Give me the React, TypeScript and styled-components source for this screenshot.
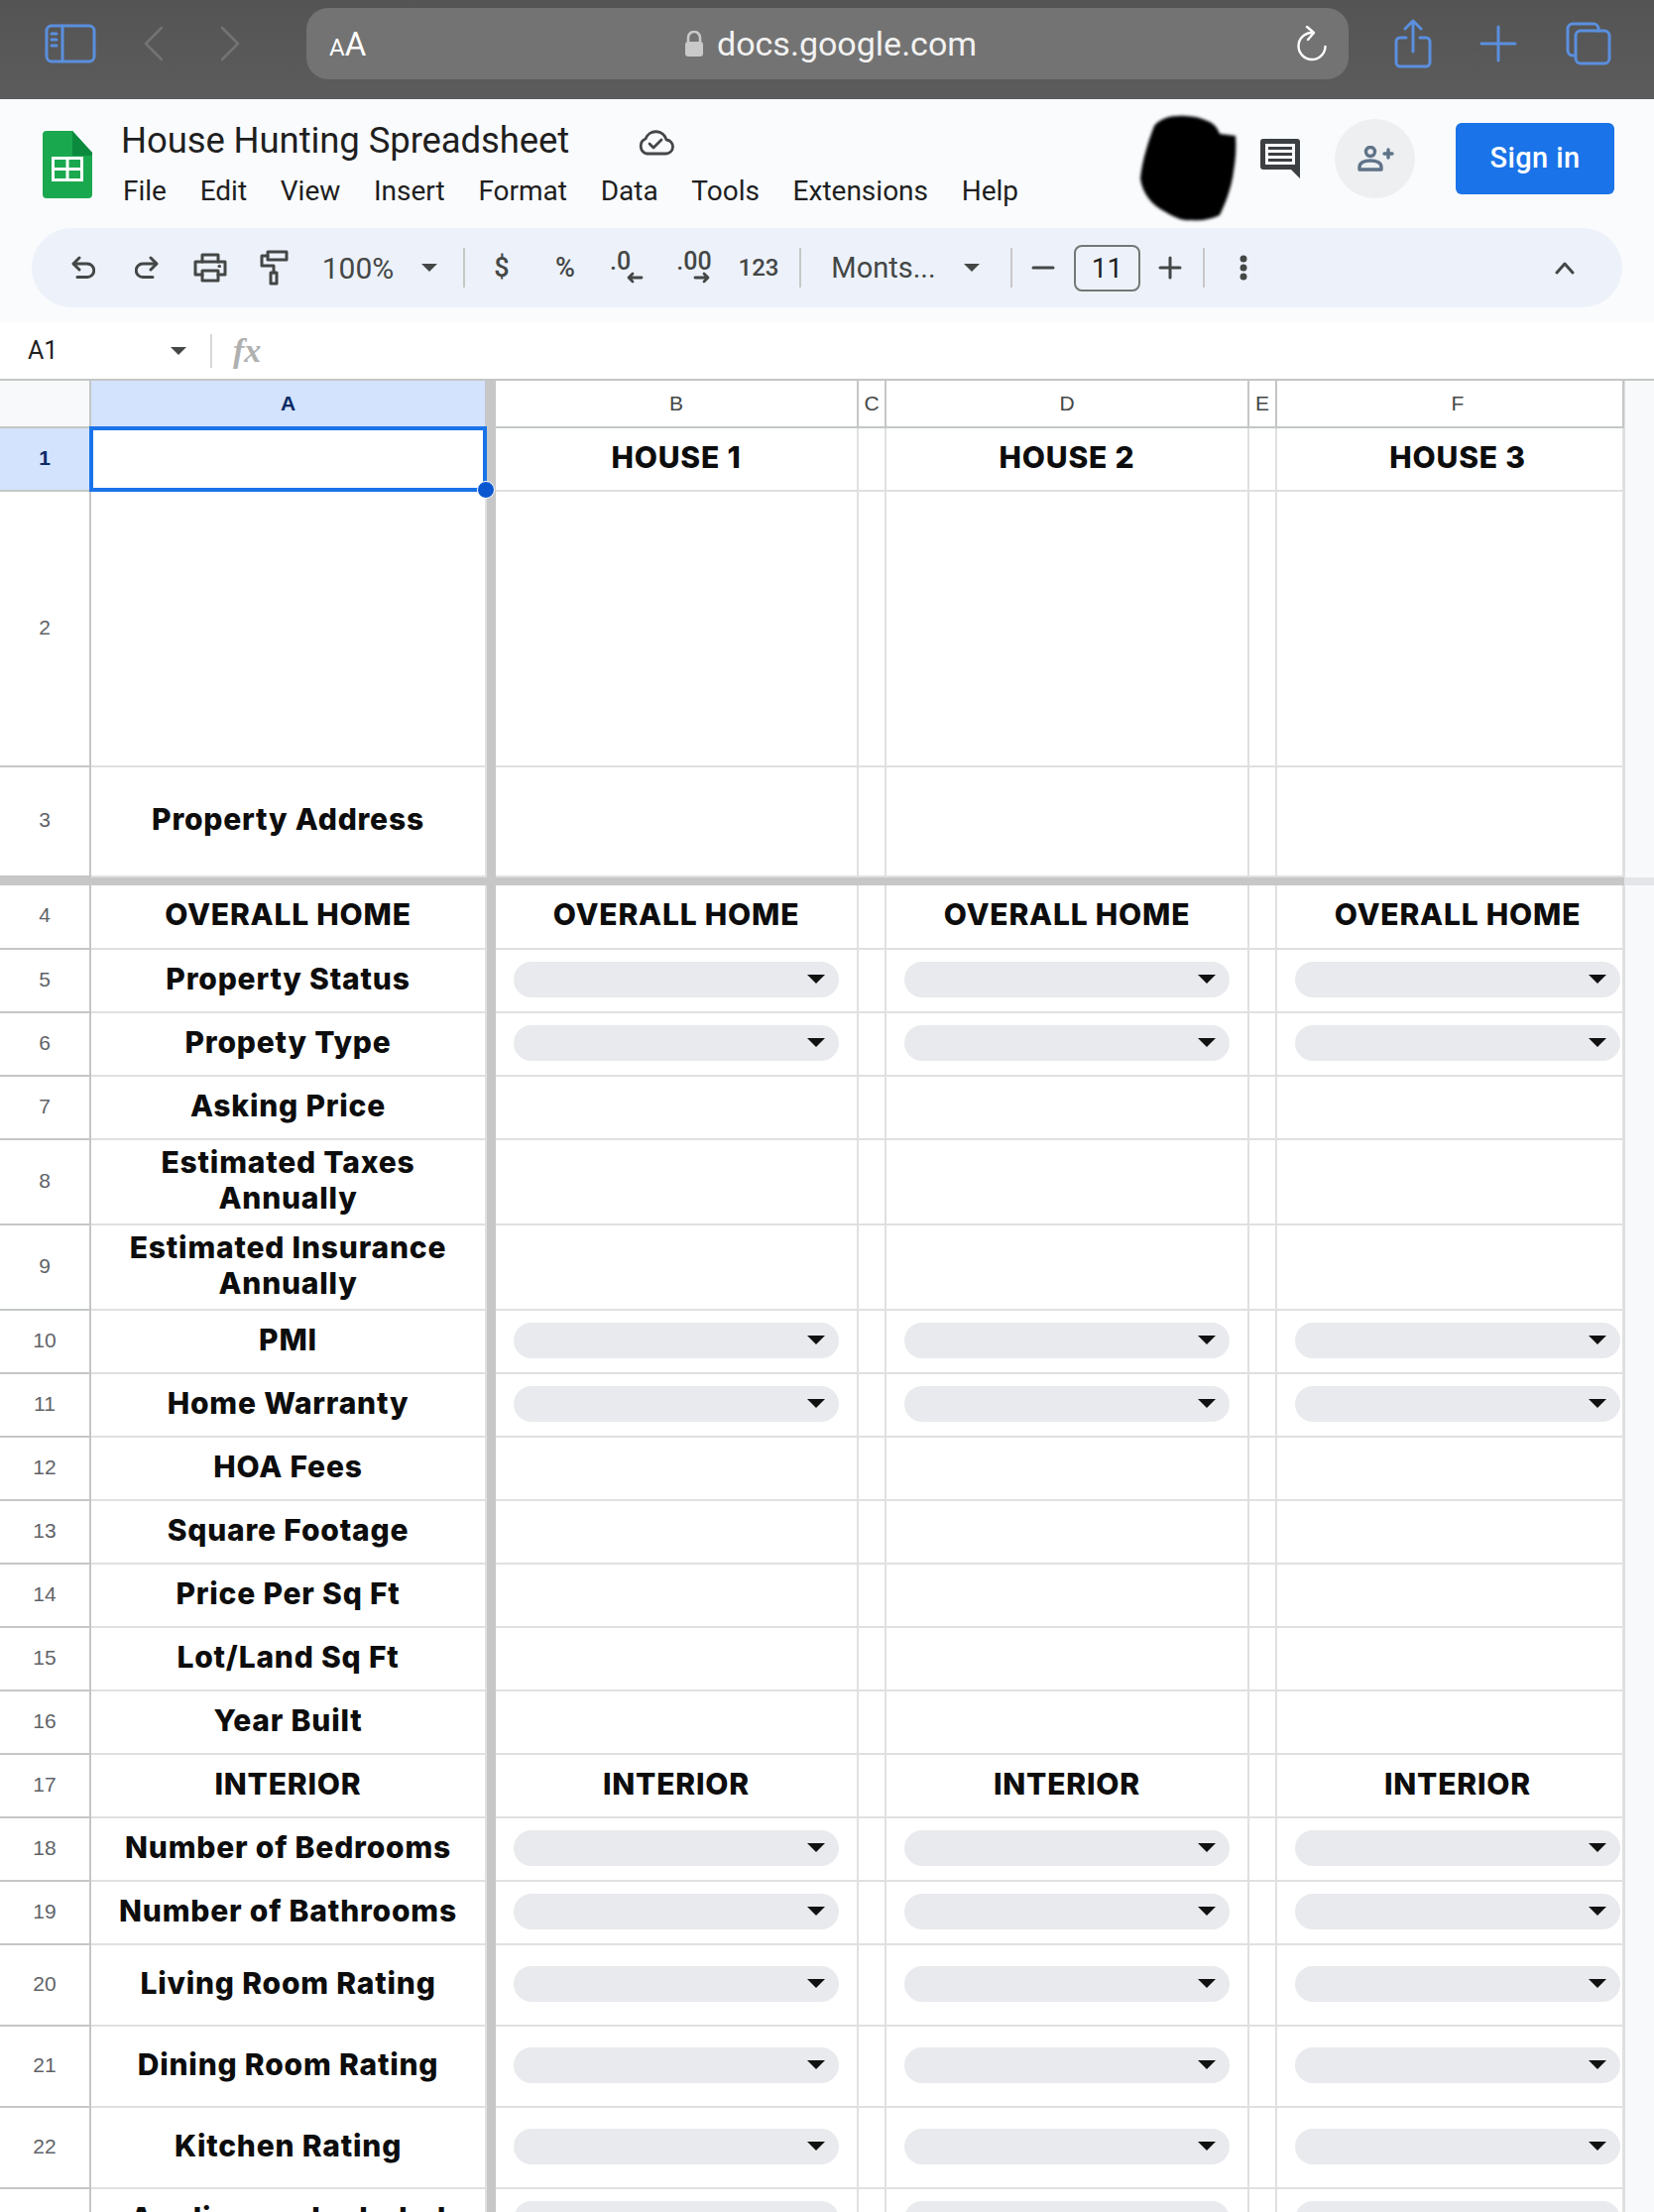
import React from 'react'
import styled, { createGlobalStyle } from 'styled-components'

const GlobalStyle = createGlobalStyle`
  html, body {
    margin: 0;
    padding: 0;
    background: #fff;
    font-family: Roboto, 'Liberation Sans', sans-serif;
  }
  * { box-sizing: border-box; }
`

const Page = styled.div`
  position: relative;
  width: 1668px;
  height: 2231px;
  overflow: hidden;
  background: #fff;
`

/* safari bar */
const SafariBar = styled.div`
  height: 100px;
  padding-bottom: 12px;
  background: linear-gradient(#545454, #5c5c5c);
  display: flex;
  align-items: center;
`

const SafariIcon = styled.div<{ $w: number; $ml: number }>`
  width: ${p => p.$w}px;
  margin-left: ${p => p.$ml}px;
  flex: none;
  display: flex;
  justify-content: center;
  align-items: center;
`

const AddressBar = styled.div`
  width: 1051px;
  height: 72px;
  margin-left: 66px;
  border-radius: 22px;
  background: #737373;
  flex: none;
  display: flex;
  align-items: center;
  color: #fff;
  padding: 0 21px 0 23px;
`

const TextSize = styled.span`
  width: 358px;
  font-size: 33px;
  line-height: 1;
  span { font-size: 24px; }
`

const HostName = styled.div`
  display: flex;
  align-items: center;
  gap: 13px;
  font-size: 34px;
  color: #f2f2f2;
  flex: 1;
`

/* docs header */
const DocHeader = styled.div`
  height: 225px;
  background: #f9fbfd;
  padding: 0 32px;
  display: flex;
  flex-direction: column;
`

const TitleRow = styled.div`
  height: 130px;
  display: flex;
  align-items: flex-start;
`

const Logo = styled.div`
  width: 50px;
  margin: 32px 0 0 11px;
  flex: none;
  line-height: 0;
`

const TitleBlock = styled.div`
  margin-left: 29px;
  flex: none;
  width: 1000px;
`

const TitleLine = styled.div`
  display: flex;
  align-items: center;
  margin-top: 17px;
  height: 48px;
`

const DocTitle = styled.span`
  font-size: 36.5px;
  color: #1f1f1f;
  letter-spacing: -0.1px;
  width: 520px;
`

const CloudIcon = styled.svg`
  margin-top: 6px;
`

const MenuRow = styled.div`
  display: flex;
  margin: 8px 0 0 2px;
  gap: 33.7px;
  font-size: 28px;
  line-height: 40px;
  color: #1f1f1f;
`

const HeaderRight = styled.div`
  display: flex;
  align-items: center;
  margin: 20px 0 0 0;
  height: 80px;
`

const CommentBtn = styled.div`
  margin-left: 149px;
  width: 40px;
  line-height: 0;
`

const ShareCircle = styled.div`
  width: 81px;
  height: 80px;
  margin-left: 35px;
  border-radius: 50%;
  background: #edeff1;
  display: flex;
  align-items: center;
  justify-content: center;
`

const SignIn = styled.div`
  width: 160px;
  height: 72px;
  margin-left: 41px;
  padding-bottom: 2px;
  border-radius: 6px;
  background: #1a73e8;
  color: #fff;
  font-size: 29px;
  font-weight: 500;
  letter-spacing: 0.4px;
  display: flex;
  align-items: center;
  justify-content: center;
`

const Blob = styled.svg`
  position: absolute;
  left: 1146px;
  top: 113px;
  filter: blur(1.5px);
`

const Toolbar = styled.div`
  height: 80px;
  width: 1604px;
  background: #edf2fa;
  border-radius: 40px;
  padding: 0 26px 0 20px;
  display: flex;
  align-items: center;
  color: #444746;
`

const Slot = styled.div<{ $w: number }>`
  width: ${p => p.$w}px;
  height: 48px;
  flex: none;
  display: flex;
  align-items: center;
  justify-content: center;
  font-size: 30px;
`

const CollapseSlot = styled(Slot)`
  margin-left: auto;
`

const FontName = styled.span`
  font-size: 29px;
`

const SmallText = styled.span`
  font-size: 24px;
  font-weight: 500;
`

const MedText = styled.span`
  font-size: 27px;
  font-weight: 500;
`

const ToolSep = styled.div`
  width: 2px;
  height: 40px;
  background: #c7c7c7;
  flex: none;
`

const SizeBox = styled.div`
  width: 67px;
  height: 47px;
  margin-left: 9px;
  border: 2px solid #747775;
  border-radius: 8px;
  display: flex;
  align-items: center;
  justify-content: center;
  font-size: 28px;
  flex: none;
  color: #1f1f1f;
`

const Decimal = styled.div`
  display: flex;
  flex-direction: column;
  align-items: flex-start;
  font-size: 25px;
  font-weight: 500;
  line-height: 20px;
  svg { margin: 0 0 0 17px; }
`

const Arrow = styled.span<{ $c?: string; $w?: number }>`
  display: block;
  width: 0;
  height: 0;
  border-left: ${p => p.$w ?? 8}px solid transparent;
  border-right: ${p => p.$w ?? 8}px solid transparent;
  border-top: ${p => p.$w ?? 8}px solid ${p => p.$c ?? '#444746'};
`

/* formula bar */
const FormulaBar = styled.div`
  height: 59px;
  border-bottom: 2px solid #c4c7c5;
  display: flex;
  align-items: center;
  background: #fff;
`

const NameBox = styled.div`
  width: 212px;
  padding: 0 24px 0 28px;
  font-size: 25px;
  color: #1f1f1f;
  display: flex;
  align-items: center;
  justify-content: space-between;
`

const FormulaSep = styled.div`
  width: 2px;
  height: 34px;
  background: #d5d7d9;
`

const Fx = styled.span`
  margin-left: 21px;
  font-family: 'Liberation Serif', serif;
  font-style: italic;
  font-weight: 700;
  font-size: 34px;
  color: #b0b0b0;
`

/* sheet */
const columns = '92px 399px 9px 366px 28px 366px 28px 350px 30px'

const ColHeaderRow = styled.div`
  display: grid;
  grid-template-columns: ${columns};
  height: 48px;
`

const ColHead = styled.div<{ $active?: boolean; $shifted?: boolean }>`
  display: flex;
  align-items: center;
  justify-content: center;
  padding-left: ${p => (p.$shifted ? 16 : 0)}px;
  padding-bottom: 1px;
  font-family: 'Liberation Sans', Arial, sans-serif;
  font-size: 21px;
  font-weight: ${p => (p.$active ? 700 : 400)};
  color: ${p => (p.$active ? '#0b2a66' : '#444746')};
  background: ${p => (p.$active ? '#d3e3fd' : '#fff')};
  border-bottom: 2px solid #c4c7c5;
  border-right: 2px solid #c4c7c5;
`

const Corner = styled(ColHead)`
  background: #f8f9fa;
`

const Row = styled.div<{ $h: number }>`
  display: grid;
  grid-template-columns: ${columns};
  height: ${p => p.$h}px;
`

const RowHead = styled.div<{ $active?: boolean }>`
  display: flex;
  align-items: center;
  justify-content: center;
  padding-bottom: 3px;
  font-family: 'Liberation Sans', Arial, sans-serif;
  font-size: 21px;
  font-weight: ${p => (p.$active ? 700 : 400)};
  color: ${p => (p.$active ? '#0b2a66' : '#5f6368')};
  background: ${p => (p.$active ? '#d3e3fd' : '#fff')};
  border-right: 2px solid #c4c7c5;
  border-bottom: 2px solid #c4c7c5;
`

const Cell = styled.div<{ $shifted?: boolean }>`
  position: relative;
  display: flex;
  align-items: center;
  justify-content: center;
  padding: 0 8px 3px ${p => (p.$shifted ? 24 : 8)}px;
  text-align: center;
  font-family: Inter, 'Liberation Sans', sans-serif;
  font-weight: 800;
  font-size: 30px;
  line-height: 35.5px;
  letter-spacing: 0.8px;
  color: #0d0d0d;
  border-right: 2px solid #e0e0e0;
  border-bottom: 2px solid #e0e0e0;
`

const Gutter = styled.div`
  background: #f8f9fa;
  border-left: 1px solid #e0e0e0;
`

const FreezeV = styled.div`
  background: #c7c7c7;
`

const FreezeH = styled.div`
  display: flex;
  height: 8px;
`

const FreezeMain = styled.div`
  width: 1638px;
  background: #c7c7c7;
`

const FreezeEdge = styled.div`
  flex: 1;
  background: #e3e5e8;
`

const Selection = styled.div`
  position: absolute;
  inset: -2px -2px -2px -2px;
  border: 4px solid #1a73e8;
`

const Handle = styled.div`
  position: absolute;
  right: -12px;
  bottom: -11px;
  width: 18px;
  height: 18px;
  border-radius: 50%;
  background: #0b57d0;
  border: 1px solid #fff;
  z-index: 2;
`

const Chip = styled.div`
  width: 328px;
  height: 36px;
  border-radius: 18px;
  background: #e8eaed;
  display: flex;
  align-items: center;
  justify-content: flex-end;
  padding-right: 14px;
  flex: none;
`

const ChipCell = styled(Cell)`
  justify-content: flex-start;
  padding: 0 0 3px 18px;
`

type RowDef = { n: number; h: number; label: string; kind?: 'chip' | 'head' }

const rowsTop: RowDef[] = [
  { n: 2, h: 278, label: '' },
  { n: 3, h: 111, label: 'Property Address' },
]

const rowsBottom: RowDef[] = [
  { n: 4, h: 65, label: 'OVERALL HOME', kind: 'head' },
  { n: 5, h: 64, label: 'Property Status', kind: 'chip' },
  { n: 6, h: 64, label: 'Propety Type', kind: 'chip' },
  { n: 7, h: 64, label: 'Asking Price' },
  { n: 8, h: 86, label: 'Estimated Taxes Annually' },
  { n: 9, h: 86, label: 'Estimated Insurance Annually' },
  { n: 10, h: 64, label: 'PMI', kind: 'chip' },
  { n: 11, h: 64, label: 'Home Warranty', kind: 'chip' },
  { n: 12, h: 64, label: 'HOA Fees' },
  { n: 13, h: 64, label: 'Square Footage' },
  { n: 14, h: 64, label: 'Price Per Sq Ft' },
  { n: 15, h: 64, label: 'Lot/Land Sq Ft' },
  { n: 16, h: 64, label: 'Year Built' },
  { n: 17, h: 64, label: 'INTERIOR', kind: 'head' },
  { n: 18, h: 64, label: 'Number of Bedrooms', kind: 'chip' },
  { n: 19, h: 64, label: 'Number of Bathrooms', kind: 'chip' },
  { n: 20, h: 82, label: 'Living Room Rating', kind: 'chip' },
  { n: 21, h: 82, label: 'Dining Room Rating', kind: 'chip' },
  { n: 22, h: 82, label: 'Kitchen Rating', kind: 'chip' },
  { n: 23, h: 64, label: 'Appliances Included', kind: 'chip' },
]

const menuItems = ['File', 'Edit', 'View', 'Insert', 'Format', 'Data', 'Tools', 'Extensions', 'Help']

const blue = '#5b8fdf'

const Stroke: React.FC<{ size?: number; w?: number; h?: number; box?: string; color?: string; sw?: number; children: React.ReactNode }> = ({
  size = 24,
  w,
  h,
  box = '0 0 24 24',
  color = '#444746',
  sw = 3,
  children,
}) => (
  <svg width={w ?? size} height={h ?? size} viewBox={box} fill="none" stroke={color} strokeWidth={sw} strokeLinecap="round" strokeLinejoin="round">
    {children}
  </svg>
)

const HouseCells: React.FC<{ row: RowDef }> = ({ row }) => {
  const content = (col: number) => {
    if (row.kind === 'chip') {
      return (
        <ChipCell key={col}>
          <Chip>
            <Arrow $c="#111" $w={9} />
          </Chip>
        </ChipCell>
      )
    }
    return (
      <Cell key={col} $shifted={col === 3}>
        {row.kind === 'head' ? row.label : ''}
      </Cell>
    )
  }
  return (
    <>
      {content(1)}
      <Cell />
      {content(2)}
      <Cell />
      {content(3)}
      <Gutter />
    </>
  )
}

const SheetRow: React.FC<{ row: RowDef }> = ({ row }) => (
  <Row $h={row.h}>
    <RowHead>{row.n}</RowHead>
    <Cell>{row.label}</Cell>
    <FreezeV />
    <HouseCells row={row} />
  </Row>
)

export default function App() {
  return (
    <Page>
      <GlobalStyle />
      <SafariBar>
        <SafariIcon $w={52} $ml={45}>
          <Stroke w={52} h={40} box="0 0 52 40" color={blue} sw={3}>
            <rect x="2" y="2" width="48" height="36" rx="5" />
            <path d="M18 2v36M7 10h5M7 16h5M7 22h5" />
          </Stroke>
        </SafariIcon>
        <SafariIcon $w={22} $ml={47}>
          <Stroke w={22} h={36} box="0 0 22 36" color="#737373" sw={2.6}>
            <path d="M19 2 3 18l16 16" />
          </Stroke>
        </SafariIcon>
        <SafariIcon $w={22} $ml={55}>
          <Stroke w={22} h={36} box="0 0 22 36" color="#737373" sw={2.6}>
            <path d="M3 2l16 16L3 34" />
          </Stroke>
        </SafariIcon>
        <AddressBar>
          <TextSize>
            <span>A</span>A
          </TextSize>
          <HostName>
            <svg width="20" height="26" viewBox="0 0 20 26">
              <path d="M4 12V7a6 6 0 0 1 12 0v5" fill="none" stroke="#c9c9c9" strokeWidth="2.6" />
              <rect x="1" y="11" width="18" height="15" rx="3" fill="#c9c9c9" />
            </svg>
            docs.google.com
          </HostName>
          <Stroke w={32} h={36} box="0 0 32 36" color="#fff" sw={2.4}>
            <path d="M16 7a13.5 13.5 0 1 0 13.5 14" />
            <path d="M11 1l7 6-6 7" />
          </Stroke>
        </AddressBar>
        <SafariIcon $w={38} $ml={46}>
          <Stroke w={38} h={50} box="0 0 38 50" color={blue} sw={3}>
            <path d="M12 19H6a4 4 0 0 0-4 4v21a4 4 0 0 0 4 4h26a4 4 0 0 0 4-4V23a4 4 0 0 0-4-4h-6" />
            <path d="M19 33V3M11 10l8-8 8 8" />
          </Stroke>
        </SafariIcon>
        <SafariIcon $w={38} $ml={48}>
          <Stroke size={38} box="0 0 38 38" color={blue} sw={3}>
            <path d="M19 2v34M2 19h34" />
          </Stroke>
        </SafariIcon>
        <SafariIcon $w={46} $ml={49}>
          <Stroke w={46} h={44} box="0 0 46 44" color={blue} sw={3}>
            <path d="M8 34H7a5 5 0 0 1-5-5V7a5 5 0 0 1 5-5h21a5 5 0 0 1 5 5v2" />
            <rect x="10" y="9" width="34" height="33" rx="5" />
          </Stroke>
        </SafariIcon>
      </SafariBar>

      <DocHeader>
        <TitleRow>
          <Logo>
            <svg width="50" height="68" viewBox="0 0 50 68">
              <path d="M4 0h26l20 22v42a4 4 0 0 1-4 4H4a4 4 0 0 1-4-4V4a4 4 0 0 1 4-4z" fill="#1aa84f" />
              <path d="M30 0l20 22v3H30z" fill="#0b8a3e" />
              <path d="M9 26h32v25H9z" fill="#fff" />
              <path d="M12 29h11.500v8H12zM26.500 29H38v8H26.500zM12 40h11.500v8H12zM26.500 40H38v8H26.500z" fill="#1aa84f" />
            </svg>
          </Logo>
          <TitleBlock>
            <TitleLine>
              <DocTitle>House Hunting Spreadsheet</DocTitle>
              <CloudIcon width="38" height="26" viewBox="0 0 38 26" fill="none" stroke="#444746" strokeWidth="2.8" strokeLinejoin="round" strokeLinecap="round">
                <path d="M10 24h19a7 7 0 0 0 1-14A11 11 0 0 0 9 9 8 8 0 0 0 10 24z" />
                <path d="M13 14l4 4 8-8" />
              </CloudIcon>
            </TitleLine>
            <MenuRow>
              {menuItems.map(m => (
                <span key={m}>{m}</span>
              ))}
            </MenuRow>
          </TitleBlock>
          <HeaderRight>
            <CommentBtn>
              <svg width="40" height="40" viewBox="0 0 40 40">
                <path d="M3 0h34a3 3 0 0 1 3 3v37l-9-9H3a3 3 0 0 1-3-3V3a3 3 0 0 1 3-3z" fill="#3c4043" />
                <path d="M5 5h30v21H5z" fill="#f9fbfd" />
                <path d="M8 8h24v3H8zM8 14h24v3H8zM8 20h24v3H8z" fill="#3c4043" />
              </svg>
            </CommentBtn>
            <ShareCircle>
              <Stroke w={38} h={26} box="0 0 38 26" color="#5f7388" sw={3.4}>
                <circle cx="14" cy="6" r="4.500" />
                <path d="M3 24v-2.500c0-4.500 5-6.500 11-6.500s11 2 11 6.500V24zM28 8h8M32 4v8" />
              </Stroke>
            </ShareCircle>
            <SignIn>Sign in</SignIn>
          </HeaderRight>
        </TitleRow>
        <Toolbar>
          <Slot $w={64}>
            <Stroke>
              <path d="M8 2 2 8l6 6" />
              <path d="M2.500 8H16a6.500 6.500 0 0 1 0 13.500H6" />
            </Stroke>
          </Slot>
          <Slot $w={64}>
            <Stroke>
              <path d="M16 2l6 6-6 6" />
              <path d="M21.500 8H8a6.500 6.500 0 0 0 0 13.500h10" />
            </Stroke>
          </Slot>
          <Slot $w={64}>
            <Stroke w={34} h={30} box="0 0 34 30">
              <path d="M9 9V2h16v7" />
              <path d="M9 22H2V9h30v13h-7" />
              <path d="M9 18h16v10H9z" />
              <path d="M26 13.500h.5" />
            </Stroke>
          </Slot>
          <Slot $w={64}>
            <Stroke w={30} h={36} box="0 0 30 36">
              <path d="M9 2h19v8H9z" />
              <path d="M9 6H3v10h12v7" />
              <path d="M12 23h6v11h-6z" />
            </Stroke>
          </Slot>
          <Slot $w={106}>100%</Slot>
          <Slot $w={38}>
            <Arrow />
          </Slot>
          <Slot $w={32}>
            <ToolSep />
          </Slot>
          <Slot $w={44}>
            <MedText>$</MedText>
          </Slot>
          <Slot $w={84}>
            <MedText>%</MedText>
          </Slot>
          <Slot $w={40}>
            <Decimal>
              .0
              <Stroke w={17} h={12} box="0 0 17 12" sw={2.8}>
                <path d="M6 2 2 6l4 4M2 6h13" />
              </Stroke>
            </Decimal>
          </Slot>
          <Slot $w={96}>
            <Decimal>
              .00
              <Stroke w={17} h={12} box="0 0 17 12" sw={2.8}>
                <path d="M11 2l4 4-4 4M15 6H2" />
              </Stroke>
            </Decimal>
          </Slot>
          <Slot $w={34}>
            <SmallText>123</SmallText>
          </Slot>
          <Slot $w={50}>
            <ToolSep />
          </Slot>
          <Slot $w={118}>
            <FontName>Monts...</FontName>
          </Slot>
          <Slot $w={60}>
            <Arrow />
          </Slot>
          <Slot $w={20}>
            <ToolSep />
          </Slot>
          <Slot $w={44}>
            <Stroke size={24}>
              <path d="M2 12h20" />
            </Stroke>
          </Slot>
          <SizeBox>11</SizeBox>
          <Slot $w={60}>
            <Stroke size={24}>
              <path d="M2 12h20M12 2v20" />
            </Stroke>
          </Slot>
          <Slot $w={8}>
            <ToolSep />
          </Slot>
          <Slot $w={72}>
            <svg width="8" height="26" viewBox="0 0 8 26" fill="#444746">
              <circle cx="4" cy="4" r="3.500" />
              <circle cx="4" cy="13" r="3.500" />
              <circle cx="4" cy="22" r="3.500" />
            </svg>
          </Slot>
          <CollapseSlot $w={64}>
            <Stroke w={22} h={14} box="0 0 22 14" sw={3}>
              <path d="M3 12l8-9 8 9" />
            </Stroke>
          </CollapseSlot>
        </Toolbar>
      </DocHeader>
      <Blob width="108" height="114" viewBox="0 0 108 114">
        <path
          d="M50 4C36 3 24 6 18 14 12 30 6 48 4 67c2 15 12 27 24 33 10 6 18 10 27 9 11 1 21-1 29-5 6-12 12-28 14-44 2-12 3-24 2-36l-16-2c-2-6-6-10-10-12C66 6 58 4 50 4z"
          fill="#000"
        />
      </Blob>

      <FormulaBar>
        <NameBox>
          A1
          <Arrow />
        </NameBox>
        <FormulaSep />
        <Fx>fx</Fx>
      </FormulaBar>

      <ColHeaderRow>
        <Corner />
        <ColHead $active>A</ColHead>
        <FreezeV />
        <ColHead>B</ColHead>
        <ColHead>C</ColHead>
        <ColHead>D</ColHead>
        <ColHead>E</ColHead>
        <ColHead $shifted>F</ColHead>
        <Gutter />
      </ColHeaderRow>

      <Row $h={64}>
        <RowHead $active>1</RowHead>
        <Cell>
          <Selection>
            <Handle />
          </Selection>
        </Cell>
        <FreezeV />
        <Cell>HOUSE 1</Cell>
        <Cell />
        <Cell>HOUSE 2</Cell>
        <Cell />
        <Cell $shifted>HOUSE 3</Cell>
        <Gutter />
      </Row>
      {rowsTop.map(r => (
        <SheetRow key={r.n} row={r} />
      ))}
      <FreezeH>
        <FreezeMain />
        <FreezeEdge />
      </FreezeH>
      {rowsBottom.map(r => (
        <SheetRow key={r.n} row={r} />
      ))}
    </Page>
  )
}
